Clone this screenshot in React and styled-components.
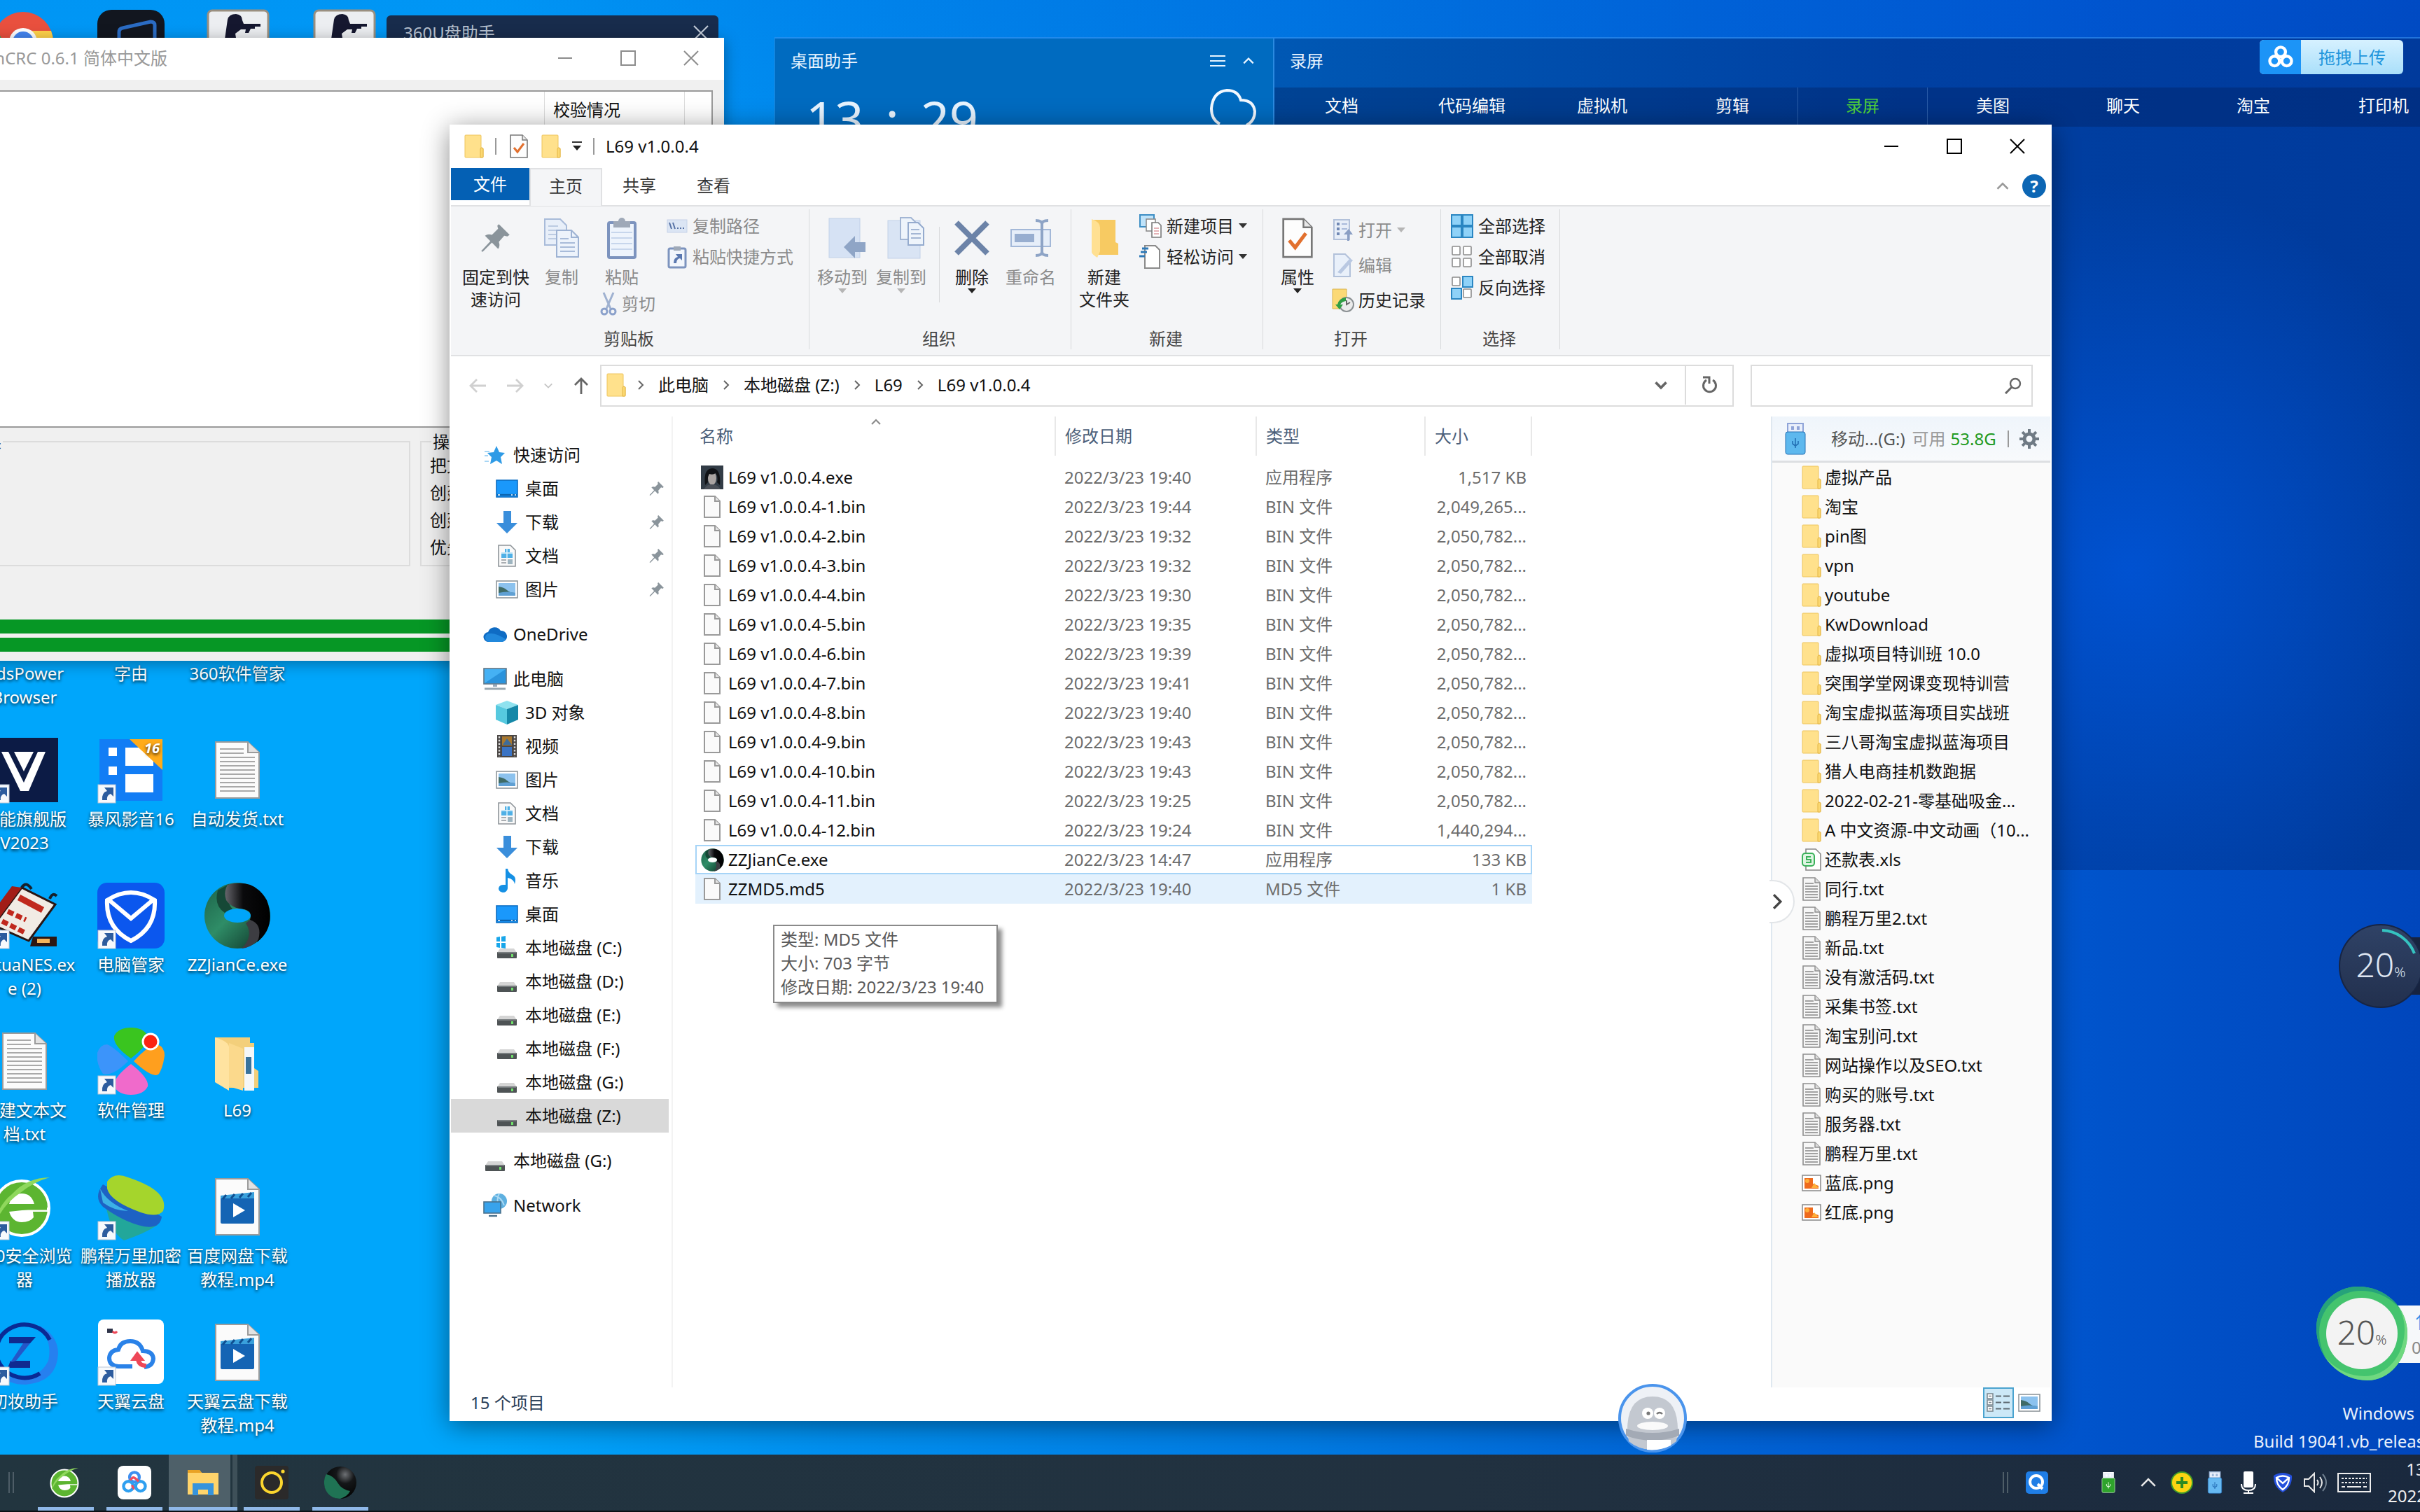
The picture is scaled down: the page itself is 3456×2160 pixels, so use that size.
// src/App.jsx

import React from 'react';
import styled, { createGlobalStyle, css } from 'styled-components';

const GlobalStyle = createGlobalStyle`
  *, *::before, *::after { box-sizing: border-box; }

  body {
    margin: 0;
    overflow: hidden;
    font-family: 'Noto Sans', 'Noto Sans CJK SC', sans-serif;
    font-size: 24px;
    line-height: 32px;
    color: #111;
  }

  button, input {
    font: inherit;
    color: inherit;
    border: 0;
    background: none;
    padding: 0;
    margin: 0;
  }

  a { color: inherit; text-decoration: none; }
  svg { display: block; flex: none; }
  ul { list-style: none; margin: 0; padding: 0; }
`;

/* ---------- Icons ---------- */

const FolderIcon = ({ w = 28, h = 34 }) => (
  <svg width={w} height={h} viewBox="0 0 28 34">
    <path d="M1 2q0-1 1-1h21q1 0 1 1v17l3 1v12q0 1-1 1H2q-1 0-1-1z" fill="#ffe18c" stroke="#eec55c" strokeWidth="1" />
    <path d="M23 33V21q0-2 2-2 2 0 2 2v11q0 1-1 1z" fill="#fbd872" stroke="#e3b445" strokeWidth="1" />
  </svg>
);

const PageIcon = ({ w = 24, h = 32 }) => (
  <svg width={w} height={h} viewBox="0 0 24 32">
    <path d="M1 1h15l7 7v23H1z" fill="#fafafa" stroke="#9a9a9a" strokeWidth="2" />
    <path d="M16 1v7h7" fill="#e4e4e4" stroke="#9a9a9a" strokeWidth="2" />
  </svg>
);

const TextFileIcon = ({ w = 26, h = 34 }) => (
  <svg width={w} height={h} viewBox="0 0 26 34">
    <path d="M1 1h17l7 7v25H1z" fill="#f6f6f6" stroke="#8f8f8f" strokeWidth="1.6" />
    <path d="M18 1v7h7" fill="#ddd" stroke="#8f8f8f" strokeWidth="1.4" />
    <path d="M4 9h12M4 13h18M4 17h18M4 21h18M4 25h18M4 29h18" stroke="#a2a2a2" strokeWidth="1.8" />
  </svg>
);

const CheckPageIcon = ({ w = 26, h = 34 }) => (
  <svg width={w} height={h} viewBox="0 0 26 34">
    <path d="M1 1h17l7 7v25H1z" fill="#fdfdfd" stroke="#777" strokeWidth="1.6" />
    <path d="M18 1v7h7" fill="#e8e8e8" stroke="#777" strokeWidth="1.4" />
    <path d="M6 19l5 6 9-12" fill="none" stroke="#e2702e" strokeWidth="3" />
  </svg>
);

const XlsIcon = () => (
  <svg width="28" height="34" viewBox="0 0 28 34">
    <path d="M6 2h14l7 7v23H6z" fill="#fff" stroke="#888" strokeWidth="1.6" />
    <rect x="1" y="8" width="17" height="18" rx="4" fill="#dff5e3" stroke="#3bb25b" strokeWidth="2" />
    <path d="M13 13H7v4h6v4H6" fill="none" stroke="#3bb25b" strokeWidth="2" />
  </svg>
);

const PngIcon = () => (
  <svg width="28" height="24" viewBox="0 0 28 24">
    <rect x="1" y="1" width="26" height="22" fill="#fff" stroke="#8f8f8f" strokeWidth="1.6" />
    <path d="M4 5h12v8l8 3v4H4z" fill="#ee6a1d" />
    <circle cx="8" cy="9" r="3" fill="#ffb03a" />
    <path d="M14 19l4-7 6 7z" fill="#ffb03a" />
  </svg>
);

const ExePortraitIcon = () => (
  <svg width="32" height="34" viewBox="0 0 32 34">
    <rect width="32" height="34" fill="#323c46" />
    <ellipse cx="16" cy="18" rx="6" ry="10" fill="#aaa4a2" />
    <path d="M6 28Q3 5 16 4q13 0 11 24l-4-4q2-8-2-13-4 3-9 1-3 4-2 12z" fill="#101216" />
    <path d="M4 34q5-8 12-7 8 0 12 7z" fill="#4a4f57" />
  </svg>
);

const OrbIcon = ({ size = 32 }) => (
  <svg width={size} height={size} viewBox="0 0 96 96">
    <defs>
      <linearGradient id="orbGreen" x1="0" y1="0" x2="1" y2="1">
        <stop offset="0" stopColor="#1c6148" />
        <stop offset=".45" stopColor="#2f8d67" />
        <stop offset="1" stopColor="#0b2c22" />
      </linearGradient>
      <linearGradient id="orbDark" x1="0" y1="0" x2="1" y2="0">
        <stop offset="0" stopColor="#66666c" />
        <stop offset=".4" stopColor="#0a0a0c" />
        <stop offset="1" stopColor="#000" />
      </linearGradient>
    </defs>
    <circle cx="48" cy="48" r="47" fill="url(#orbGreen)" />
    <path d="M20 12Q14 34 30 44l12-4Q28 24 36 3z" fill="#164836" />
    <path d="M34 4Q72-6 90 26q14 38-14 60 8-18-10-32 4-12-8-15Q40 38 32 26 28 14 34 4z" fill="url(#orbDark)" />
    <path d="M66 54q18 6 12 28-10 12-24 13 18-18 6-36z" fill="#3d3d42" />
    <ellipse cx="48" cy="48" rx="19" ry="10" fill={size > 40 ? '#00a5fa' : '#fff'} />
  </svg>
);

const SphereIcon = () => (
  <svg width="48" height="48" viewBox="0 0 48 48">
    <defs>
      <radialGradient id="sphere" cx=".65" cy=".25" r=".8">
        <stop offset="0" stopColor="#6d7074" />
        <stop offset=".35" stopColor="#141618" />
        <stop offset="1" stopColor="#000" />
      </radialGradient>
    </defs>
    <circle cx="24" cy="24" r="23" fill="url(#sphere)" />
    <path d="M4 12q10 2 16 12t18 12q-4 8-14 11Q8 47 2 32-1 20 4 12z" fill="#1f7354" />
  </svg>
);

const PinIcon = ({ size = 22, color = '#8a949b' }) => (
  <svg width={size} height={size} viewBox="0 0 40 40">
    <path d="M24 2l14 14-3 2-4-1-7 8q2 6-1 9l-8-8L3 38l-2-1 12-13-7-7q4-3 9-1l8-8-1-4z" fill={color} />
  </svg>
);

const StarIcon = () => (
  <svg width="32" height="32" viewBox="0 0 32 32">
    <path d="M18 3l4 9 8 1-6 6 2 10-8-5-9 5 2-10-6-6 9-1z" fill="#2f9be6" />
    <path d="M1 11h7M1 17h5M1 25h6" stroke="#a7d6f5" strokeWidth="2" />
  </svg>
);

const DesktopIcon = () => (
  <svg width="32" height="26" viewBox="0 0 32 26">
    <rect x="1" y="1" width="30" height="24" fill="#1a98fb" stroke="#0d6fc4" strokeWidth="1.6" />
    <path d="M2 22h28" stroke="#0b62ad" strokeWidth="2.4" />
    <path d="M3 22h3M22 22h2M27 22h2" stroke="#fff" strokeWidth="1.6" />
  </svg>
);

const DownloadIcon = () => (
  <svg width="30" height="32" viewBox="0 0 30 32">
    <path d="M10 0h11v17h9L15 32 0 17h10z" fill="#3a8edb" />
  </svg>
);

const DocIcon = () => (
  <svg width="26" height="32" viewBox="0 0 26 32">
    <path d="M1 1h17l7 7v23H1z" fill="#f9f9f9" stroke="#8e9499" strokeWidth="1.6" />
    <path d="M10 6h7v5h4v8H5v-8h5z" fill="#4fb0e6" />
    <path d="M5 12h16M13 6v13" stroke="#e6f5fd" strokeWidth="1.4" />
    <path d="M5 22h7M5 26h7" stroke="#8e9499" strokeWidth="1.6" />
    <rect x="14" y="21" width="7" height="7" fill="#9db4c0" />
  </svg>
);

const PictureIcon = () => (
  <svg width="32" height="26" viewBox="0 0 32 26">
    <rect x="1" y="1" width="30" height="24" fill="#fff" stroke="#8f979c" strokeWidth="1.6" />
    <rect x="4" y="4" width="24" height="18" fill="#8cc2ee" />
    <path d="M4 9q8 1 12 5t12 4v2H4z" fill="#3f6b66" />
    <path d="M4 18q12-3 24 0v4H4z" fill="#5fa0d4" />
  </svg>
);

const CloudIcon = () => (
  <svg width="34" height="22" viewBox="0 0 34 22">
    <path d="M8 22a7 7 0 0 1-1-14A10 10 0 0 1 25 6a8 8 0 0 1 2 16z" fill="#0f6cc4" />
    <path d="M8 22a6 6 0 0 1 2-12q8-1 22 8-2 4-6 4z" fill="#2188dc" />
  </svg>
);

const PcIcon = () => (
  <svg width="34" height="32" viewBox="0 0 34 32">
    <rect x="1" y="1" width="32" height="22" fill="#45b1f4" stroke="#5f7686" strokeWidth="1.6" />
    <path d="M2 22L32 2v20z" fill="#2a93dc" />
    <path d="M14 24h6v3h-6z" fill="#9ab" />
    <path d="M2 30h30" stroke="#9aa8b0" strokeWidth="3" />
  </svg>
);

const CubeIcon = () => (
  <svg width="32" height="34" viewBox="0 0 32 34">
    <path d="M16 0l16 6-16 6L0 6z" fill="#8fe2ef" />
    <path d="M0 6l16 6v22L0 27z" fill="#56c9df" />
    <path d="M32 6l-16 6v22l16-7z" fill="#1588a8" />
  </svg>
);

const VideoIcon = () => (
  <svg width="28" height="32" viewBox="0 0 28 32">
    <rect width="28" height="32" fill="#4a4644" />
    <rect x="7" y="2" width="14" height="13" fill="#a8782f" />
    <path d="M8 14l6-9 7 9z" fill="#3e6c9a" />
    <rect x="7" y="17" width="14" height="13" fill="#3a73c4" />
    <path d="M3 2v29M25 2v29" stroke="#ddd" strokeWidth="2.4" strokeDasharray="2.4 2.4" />
  </svg>
);

const MusicIcon = () => (
  <svg width="26" height="34" viewBox="0 0 26 34">
    <path d="M11 0h3q1 6 7 9t3 13q-1-7-10-9v15q-1 6-7 6-6-1-6-6 1-5 7-5h3z" fill="#1590e4" />
  </svg>
);

const DriveIcon = ({ win, flat }) => (
  <svg width="32" height="34" viewBox="0 0 32 34">
    {win && <path d="M1 2l5-1v7H1zM8 1l6-1v8H8zM1 10h5v7l-5-1zM8 10h6v8l-6-1z" fill="#18a6ea" />}
    {!flat && <path d="M6 18h20l4 6H2z" fill="#d5d5d5" />}
    <rect x="2" y="23" width="28" height="9" rx="1" fill="#4e5355" />
    <path d="M3 24h26" stroke="#8b9092" strokeWidth="1.4" />
    <rect x="22" y="26" width="3" height="4" fill="#6fe06a" />
  </svg>
);

const NetworkIcon = () => (
  <svg width="34" height="36" viewBox="0 0 34 36">
    <circle cx="23" cy="12" r="11" fill="#5eb0e0" />
    <path d="M16 4q10 2 14 14M23 1q-5 8 0 22" stroke="#a9d8f3" strokeWidth="2" fill="none" />
    <rect x="1" y="13" width="24" height="16" fill="#38a3ec" stroke="#48708c" strokeWidth="1.6" />
    <path d="M8 33h12" stroke="#48708c" strokeWidth="2.4" />
  </svg>
);

const Chevron = ({ dir = 'right', size = 16, color = '#555', stroke = 2 }) => {
  const d = {
    right: 'M5 2l6 6-6 6',
    down: 'M2 5l6 6 6-6',
    up: 'M2 11l6-6 6 6',
  }[dir];
  return (
    <svg width={size} height={size} viewBox="0 0 16 16">
      <path d={d} fill="none" stroke={color} strokeWidth={stroke} />
    </svg>
  );
};

const Caret = ({ color = '#333' }) => (
  <svg width="12" height="8" viewBox="0 0 12 8">
    <path d="M0 0h12L6 7z" fill={color} />
  </svg>
);

const ArrowIcon = ({ dir, color }) => (
  <svg width="28" height="28" viewBox="0 0 28 28">
    <g transform={dir === 'right' ? 'rotate(180 14 14)' : dir === 'up' ? 'rotate(90 14 14)' : undefined}>
      <path d="M26 14H4M13 5l-9 9 9 9" fill="none" stroke={color} strokeWidth="2.8" />
    </g>
  </svg>
);

const MinIcon = ({ color = '#000' }) => (
  <svg width="20" height="20" viewBox="0 0 20 20"><path d="M0 10h20" stroke={color} strokeWidth="2" /></svg>
);
const MaxIcon = ({ color = '#000' }) => (
  <svg width="22" height="22" viewBox="0 0 22 22"><rect x="1" y="1" width="20" height="20" fill="none" stroke={color} strokeWidth="2" /></svg>
);
const CloseIcon = ({ color = '#000' }) => (
  <svg width="22" height="22" viewBox="0 0 22 22"><path d="M1 1l20 20M21 1L1 21" stroke={color} strokeWidth="2" /></svg>
);

const CopyIcon = () => (
  <svg width="50" height="56" viewBox="0 0 50 56">
    <path d="M1 1h22l9 9v28H1z" fill="#e8eff9" stroke="#a8bbd9" strokeWidth="2" />
    <path d="M6 11h14M6 17h20M6 23h20M6 29h20" stroke="#bccbe2" strokeWidth="2" />
    <path d="M18 17h21l10 10v28H18z" fill="#edf3fb" stroke="#9db2d3" strokeWidth="2" />
    <path d="M39 17v10h10" fill="none" stroke="#9db2d3" strokeWidth="2" />
    <path d="M23 29h12M23 35h21M23 41h21M23 47h21" stroke="#a8bbd9" strokeWidth="2" />
  </svg>
);

const PasteIcon = () => (
  <svg width="42" height="60" viewBox="0 0 42 60">
    <rect x="2" y="8" width="38" height="50" rx="2" fill="#eef4fc" stroke="#7c93be" strokeWidth="4" />
    <path d="M6 22h30M6 30h30M6 38h30M6 46h30" stroke="#c7d6ec" strokeWidth="2" />
    <path d="M9 6h7a5 5 0 0 1 10 0h7v9H9z" fill="#9fa9b8" />
  </svg>
);

const ScissorsIcon = () => (
  <svg width="24" height="34" viewBox="0 0 24 34">
    <path d="M5 1l10 23M19 1L9 24" stroke="#9fb1d0" strokeWidth="3" />
    <circle cx="6" cy="28" r="4" fill="none" stroke="#8ba1cb" strokeWidth="3" />
    <circle cx="18" cy="28" r="4" fill="none" stroke="#8ba1cb" strokeWidth="3" />
  </svg>
);

const CopyPathIcon = () => (
  <svg width="30" height="20" viewBox="0 0 30 20">
    <rect x="1" y="1" width="28" height="18" fill="#dbe5f4" stroke="#c5d2e8" />
    <path d="M4 5l3 9M9 5l3 9" stroke="#5772a5" strokeWidth="2" />
    <path d="M15 13h2M19 13h2M23 13h2" stroke="#5772a5" strokeWidth="2" />
  </svg>
);

const PasteShortcutIcon = () => (
  <svg width="30" height="34" viewBox="0 0 30 34">
    <rect x="3" y="5" width="24" height="27" rx="2" fill="#f2f6fc" stroke="#7c93be" strokeWidth="3" />
    <path d="M10 2h10v6H10z" fill="#9fa9b8" />
    <path d="M10 26q0-8 6-9l-3-4h9v9l-3-3q-5 1-5 7z" fill="#5a78b0" />
  </svg>
);

const MoveToIcon = () => (
  <svg width="54" height="58" viewBox="0 0 54 58">
    <rect x="1" y="1" width="44" height="56" fill="#d6e2f4" stroke="#c1d1e8" />
    <path d="M53 35v14H38v9L22 42l16-16v9z" fill="#8fa5c6" />
  </svg>
);

const CopyToIcon = () => (
  <svg width="54" height="60" viewBox="0 0 54 60">
    <rect x="1" y="5" width="46" height="54" fill="#d9e4f4" stroke="#c1d1e8" />
    <path d="M19 1h15l7 7v24H19z" fill="#eef4fb" stroke="#a3b6d4" strokeWidth="2" />
    <path d="M30 8h14l8 8v24H30z" fill="#eef4fb" stroke="#95abce" strokeWidth="2" />
    <path d="M34 18h12M34 24h14M34 30h14" stroke="#a3b6d4" strokeWidth="2" />
  </svg>
);

const DeleteIcon = () => (
  <svg width="52" height="52" viewBox="0 0 52 52">
    <path d="M4 4l44 44M48 4L4 48" stroke="#6c83a8" strokeWidth="8" />
  </svg>
);

const RenameIcon = () => (
  <svg width="58" height="54" viewBox="0 0 58 54">
    <rect x="1" y="15" width="56" height="24" fill="#e6eef9" stroke="#a3b8d8" strokeWidth="2" />
    <rect x="6" y="21" width="28" height="12" fill="#98aed0" />
    <path d="M36 2q9 0 9 5v40q0 5-9 5M54 2q-9 0-9 5v40q0 5 9 5" fill="none" stroke="#8ea4c6" strokeWidth="4" />
  </svg>
);

const NewFolderIcon = () => (
  <svg width="40" height="56" viewBox="0 0 40 56">
    <path d="M2 2h34v32l4 2v16H10z" fill="#f7ca62" />
    <path d="M2 1q12 4 12 12v34l-4 9q-8-5-8-8z" fill="#ffe092" />
  </svg>
);

const NewItemIcon = () => (
  <svg width="32" height="34" viewBox="0 0 32 34">
    <rect x="1" y="1" width="20" height="17" fill="#bfe3fa" stroke="#3d8ec4" strokeWidth="2" />
    <rect x="10" y="7" width="13" height="17" fill="#fff" stroke="#8a8a8a" strokeWidth="1.6" />
    <path d="M18 12h9l4 4v17H18z" fill="#fff" stroke="#7a7a7a" strokeWidth="1.6" />
    <path d="M21 20h7M21 24h7M21 28h7" stroke="#dd9aa0" strokeWidth="1.6" />
  </svg>
);

const EasyAccessIcon = () => (
  <svg width="32" height="34" viewBox="0 0 32 34">
    <path d="M8 1h15l6 6v26H8z" fill="#fff" stroke="#8a8a8a" strokeWidth="2" />
    <path d="M4 5h9M2 10h9M0 16h8" stroke="#2e7ab8" strokeWidth="3" />
  </svg>
);

const OpenListIcon = () => (
  <svg width="28" height="32" viewBox="0 0 28 32">
    <rect x="1" y="1" width="22" height="28" fill="#e7eef8" stroke="#b2c1da" strokeWidth="2" />
    <path d="M5 7h4M5 14h4M5 21h4" stroke="#7088b4" strokeWidth="4" />
    <path d="M12 7h8M12 14h8" stroke="#a9badb" strokeWidth="2" />
    <path d="M20 31V22h-5l7-8 6 8h-5v9z" fill="#8a9fc4" />
  </svg>
);

const EditIcon = () => (
  <svg width="28" height="34" viewBox="0 0 28 34">
    <path d="M1 1h16l7 7v25H1z" fill="#e9f0fa" stroke="#b2c1da" strokeWidth="2" />
    <path d="M6 27L24 7l4 3-17 19z" fill="#b9c8e2" />
  </svg>
);

const HistoryIcon = () => (
  <svg width="32" height="34" viewBox="0 0 32 34">
    <path d="M1 1h20v28H1z" fill="#fbd976" stroke="#d9b450" />
    <circle cx="21" cy="23" r="10" fill="#ebebeb" stroke="#8a8f92" strokeWidth="2" />
    <path d="M20 13q-10 1-12 10h-3l6 7 5-7h-4q2-4 8-5z" fill="#2f9e44" />
    <path d="M21 17v6l5-3" stroke="#666" strokeWidth="2" fill="none" />
  </svg>
);

const SelectGrid = ({ on }) => (
  <svg width="32" height="34" viewBox="0 0 32 34">
    {[[1, 1], [17, 1], [1, 18], [17, 18]].map(([x, y], i) =>
      on[i] ? (
        <rect key={i} x={x} y={y} width="14" height="15" fill="#8fd2f8" stroke="#2a86c2" strokeWidth="2" />
      ) : (
        <rect key={i} x={x + 1} y={y + 1} width="11" height="12" rx="1" fill="#fff" stroke="#8c8c8c" strokeWidth="1.6" />
      )
    )}
  </svg>
);

const UsbIcon = ({ w = 30, h = 46, body = '#5db8ee', cap = '#8fa4d8', mark = '#2470b4' }) => (
  <svg width={w} height={h} viewBox="0 0 30 46">
    <rect x="4" y="1" width="22" height="14" fill="#e9effb" stroke={cap} strokeWidth="2" />
    <path d="M9 5h4v5H9zM17 5h4v5h-4z" fill={cap} />
    <rect x="1" y="13" width="28" height="32" rx="3" fill={body} stroke={mark} strokeWidth="1" />
    <path d="M15 22v14M11 26v4l4 3 4-3v-4" fill="none" stroke={mark} strokeWidth="1.6" />
  </svg>
);

const GearIcon = () => (
  <svg width="30" height="30" viewBox="0 0 30 30">
    <circle cx="15" cy="15" r="7" fill="none" stroke="#6f7a84" strokeWidth="5" />
    {[0, 45, 90, 135, 180, 225, 270, 315].map((a) => (
      <path key={a} d="M15 1v5" stroke="#6f7a84" strokeWidth="4" transform={`rotate(${a} 15 15)`} />
    ))}
  </svg>
);

const DetailsViewIcon = () => (
  <svg width="34" height="28" viewBox="0 0 34 28">
    {[1, 10, 19].map((y) => (
      <g key={y}>
        <rect x="1" y={y} width="8" height="7" fill="#fff" stroke="#7d8a92" strokeWidth="1.6" />
        <path d={`M3 ${y + 3.5}h4`} stroke="#7d8a92" strokeWidth="1.6" />
        <path d={`M13 ${y + 3.5}h8M24 ${y + 3.5}h9`} stroke="#5f6b73" strokeWidth="2" />
      </g>
    ))}
  </svg>
);

const BaiduIcon = ({ size = 44, mono }) => (
  <svg width={size} height={size} viewBox="0 0 44 44">
    <circle cx="22" cy="13" r="8" fill="none" stroke={mono ? '#fff' : '#3e8ff0'} strokeWidth="5" />
    <circle cx="12" cy="28" r="8" fill="none" stroke={mono ? '#fff' : '#2fa0f0'} strokeWidth="5" />
    <circle cx="32" cy="28" r="8" fill="none" stroke={mono ? '#fff' : '#2fa0f0'} strokeWidth="5" />
    {!mono && <path d="M15 18q4-6 7-4t7 6M18 26q2 6 4 6" stroke="#ee4d5e" strokeWidth="4" fill="none" />}
  </svg>
);

const ShortcutBadge = () => (
  <g>
    <rect x="1" y="69" width="25" height="26" fill="#f7f9fc" stroke="#b9c6d6" />
    <path d="M7 91q-1-11 7-13l-4-5h13v13l-4-4q-6 2-5 9z" fill="#2d5c9e" />
  </g>
);

const BigIcon = ({ children, shortcut }) => (
  <svg width="96" height="96" viewBox="0 0 96 96">
    {children}
    {shortcut && <ShortcutBadge />}
  </svg>
);

const BigPage = () => (
  <g>
    <path d="M17 8h46l16 15v65H17z" fill="#fbfbfb" stroke="#9b9b9b" strokeWidth="2" />
    <path d="M63 8v15h16" fill="#e2e2e2" stroke="#9b9b9b" strokeWidth="2" />
  </g>
);

const BigTxt = () => (
  <BigIcon>
    <BigPage />
    <path d="M23 18h34M23 24h34M23 30h50M23 36h50M23 42h50M23 48h50M23 54h50M23 60h50M23 66h50M23 72h50M23 78h50" stroke="#a9a9a9" strokeWidth="2" />
  </BigIcon>
);

const BigMp4 = () => (
  <BigIcon>
    <BigPage />
    <rect x="24" y="34" width="48" height="38" rx="2" fill="#1464b4" />
    <path d="M24 32l48-5v9H24z" fill="#39a0dc" />
    <path d="M32 31l-5 6M44 30l-5 6M56 29l-5 6M68 28l-5 6" stroke="#0f4f92" strokeWidth="3" />
    <path d="M42 43v20l17-10z" fill="#fff" />
  </BigIcon>
);

const BrowserE = () => (
  <g>
    <circle cx="44" cy="50" r="39" fill="#5cb531" stroke="#fff" strokeWidth="4" />
    <path d="M26 44q4-15 18-15t18 15zM26 55h55v-6M26 55q5 15 18 15 12 0 17-7l-1-8" fill="#fff" />
    <path d="M26 49h54" stroke="#5cb531" strokeWidth="7" />
    <path d="M30 30Q52 6 84 6 62 12 42 28 18 44 6 72q4-26 24-42z" fill="#8fd85c" />
  </g>
);

const Big = {
  chrome: () => (
    <BigIcon>
      <circle cx="46" cy="48" r="43" fill="#e9503e" />
      <path d="M46 32h40a43 43 0 0 1 3 16q0 30-28 41z" fill="#ffd24a" />
      <path d="M8 30l34 60q-24 0-36-26-6-18 2-34z" fill="#3ba657" />
      <circle cx="46" cy="48" r="20" fill="#fff" />
      <circle cx="46" cy="48" r="15" fill="#4384f0" />
    </BigIcon>
  ),
  device: () => (
    <BigIcon>
      <rect x="0" y="2" width="96" height="92" rx="20" fill="#12161f" />
      <path d="M31 80V34q0-5 5-6l40-9q6 0 6 5v50" fill="none" stroke="#2b6cc4" strokeWidth="5" />
    </BigIcon>
  ),
  soldier: () => (
    <BigIcon>
      <rect x="6" y="3" width="86" height="90" rx="6" fill="#eceef1" stroke="#9a8f80" strokeWidth="3" />
      <path d="M34 16q2-8 12-8 9 1 9 9l2 5h24v4h-8v3h-6l-3 6h-5l1-5h-7l-8 6 2 12 8 14 6 30H50l-6-22-6 22H28l4-30-2-18z" fill="#15172f" />
    </BigIcon>
  ),
  vLogo: () => (
    <BigIcon shortcut>
      <rect x="0" y="2" width="96" height="92" fill="#0c1b45" />
      <path d="M15 22h10l22 44 20-44h11L54 78H42z" fill="#fff" />
      <path d="M33 22h28L47 50z" fill="#fff" />
    </BigIcon>
  ),
  storm: () => (
    <BigIcon shortcut>
      <rect x="3" y="4" width="90" height="88" fill="#127df5" />
      <path d="M16 16h12v12H16zM16 43h12v12H16zM40 16h40v26H40zM40 54h40v26H40z" fill="#fff" />
      <path d="M46 4h47v44z" fill="#ffab1a" />
      <text x="67" y="24" fontSize="20" fontWeight="700" fontStyle="italic" fill="#fff">16</text>
    </BigIcon>
  ),
  txt: BigTxt,
  nes: () => (
    <BigIcon shortcut>
      <path d="M4 62L44 8l48 24-38 52z" fill="#f1ebe4" stroke="#2a1512" strokeWidth="3" />
      <path d="M4 62L44 8l-14-2L2 44z" fill="#a21d17" />
      <path d="M40 22l34 18" stroke="#c0281d" strokeWidth="9" />
      <path d="M24 42l26 12M16 56l32 16" stroke="#c0281d" strokeWidth="7" strokeDasharray="9 4" />
      <path d="M60 78h34v14H56z" fill="#2d1714" />
      <path d="M66 84h18" stroke="#f5b45c" strokeWidth="6" />
      <path d="M44 8q6-10 14 2M84 24q4-10 10-4" stroke="#16202c" strokeWidth="4" fill="none" />
    </BigIcon>
  ),
  shield: () => (
    <BigIcon shortcut>
      <rect x="0" y="1" width="96" height="94" rx="14" fill="#0b57ee" />
      <path d="M14 26q34-22 68 0 2 40-34 58-36-18-34-58z" fill="none" stroke="#fff" strokeWidth="6" />
      <path d="M17 26l31 26 31-26" fill="none" stroke="#fff" strokeWidth="6" />
    </BigIcon>
  ),
  orb: () => <OrbIcon size={96} />,
  petals: () => (
    <BigIcon shortcut>
      <path d="M48 44Q22 26 24 12q6-12 24-12t24 12q2 12-24 32z" fill="#3ac51f" />
      <path d="M44 48Q22 70 8 66-2 52 0 36q4-12 14-12 10 4 30 24z" fill="#3c94fa" />
      <path d="M48 52q26 20 24 32-6 12-24 12t-24-12q-2-12 24-32z" fill="#f06acb" />
      <path d="M52 48q22-24 34-24 10 4 10 16-2 16-8 26-8 8-36-18z" fill="#ff9f1e" />
      <circle cx="76" cy="20" r="11" fill="#fb2412" stroke="#fff" strokeWidth="3" />
    </BigIcon>
  ),
  l69: () => (
    <BigIcon>
      <path d="M16 14h50v8h6v36l6 4v24H34z" fill="#f3cf7b" />
      <path d="M58 28h14v62H58z" fill="#f4f7f9" />
      <path d="M60 42h8v24h-8z" fill="#39739c" />
      <path d="M16 14q20 6 20 14v62l-20-12z" fill="#ffe3a0" />
      <path d="M36 22l20 8v60l-20-6z" fill="#fbd98c" />
    </BigIcon>
  ),
  browser: () => <BigIcon shortcut><BrowserE /></BigIcon>,
  player: () => (
    <BigIcon shortcut>
      <path d="M12 44q6 40 26 52 30-10 48-22z" fill="#22a79a" />
      <path d="M8 16Q-6 34 8 48q30 22 58 28 24 4 26-14z" fill="#1d62c4" />
      <path d="M14 12Q24-2 44 6q36 12 46 26 8 10 4 22-8 10-32 2Q18 40 14 22z" fill="#a5d52c" />
      <path d="M4 22q10 20 40 32-20 0-36-12z" fill="#3cb2e6" />
    </BigIcon>
  ),
  mp4: BigMp4,
  zLogo: () => (
    <BigIcon shortcut>
      <path d="M70 10q26 14 26 40-2 40-46 44-26 0-36-14 50 16 68-20 6-26-12-50z" fill="#2680ef" />
      <path d="M84 30A40 38 0 1 0 70 78" fill="none" stroke="#0a2a94" strokeWidth="6" />
      <path d="M26 26h38l-8 9H26zM28 60h28v10H24z" fill="#102a90" />
      <path d="M56 35L36 60l-8 2 18-27z" fill="#2457c8" />
    </BigIcon>
  ),
  tianyi: () => (
    <BigIcon shortcut>
      <rect x="1" y="1" width="94" height="92" rx="8" fill="#fff" />
      <path d="M14 14h8v6h-8z" fill="#30354a" />
      <path d="M22 18q3 4 6 0" stroke="#ee4757" strokeWidth="3" fill="none" />
      <path d="M50 68H30q-13-1-13-12 1-11 13-12 3-12 17-12t18 14q14 0 15 11-1 11-13 12" fill="none" stroke="#2a82e8" strokeWidth="6" />
      <path d="M68 69q-10-1-12-10h-7l8-11 9 11h-5q1 6 8 6z" fill="#ee4757" stroke="#ee4757" strokeWidth="2" />
    </BigIcon>
  ),
  blank: () => <BigIcon />,
};

/* ---------- Desktop ---------- */

const Screen = styled.div`
  height: 100vh;
  display: flex;
  flex-direction: column;
  overflow: hidden;
`;

const Desktop = styled.main`
  position: relative;
  flex: 1;
  min-height: 0;
  overflow: hidden;
  background:
    linear-gradient(180deg, rgba(0, 90, 220, 0.22) 0, rgba(0, 90, 220, 0) 24%),
    linear-gradient(90deg, #00a6fb 0%, #00a6fb 20%, #0090f0 34%, #007ae2 54%, #0064d6 70%, #0054cc 86%, #0046bc 100%);
`;

const IconGrid = styled.ul`
  position: absolute;
  left: -41px;
  top: ${(p) => p.$top}px;
  display: grid;
  grid-template-columns: repeat(${(p) => p.$cols}, 152px);
  grid-auto-rows: 208px;
`;

const DesktopItem = styled.a`
  display: flex;
  flex-direction: column;
  align-items: center;
  gap: 5px;
  padding-top: 6px;
  color: #fff;
  line-height: 34px;
  text-align: center;
  text-shadow: 0 2px 4px rgba(0, 0, 0, 0.8);
`;

const DesktopLabel = styled.span`
  white-space: pre;
`;

const topIcons = [['chrome'], ['device'], ['soldier'], ['soldier']];

const desktopIcons = [
  ['blank', 'AdsPower\nBrowser'], ['blank', '字由'], ['blank', '360软件管家'],
  ['vLogo', '全能旗舰版\nV2023'], ['storm', '暴风影音16'], ['txt', '自动发货.txt'],
  ['nes', 'VirtuaNES.ex\ne (2)'], ['shield', '电脑管家'], ['orb', 'ZZJianCe.exe'],
  ['txt', '新建文本文\n档.txt'], ['petals', '软件管理'], ['l69', 'L69'],
  ['browser', '360安全浏览\n器'], ['player', '鹏程万里加密\n播放器'], ['mp4', '百度网盘下载\n教程.mp4'],
  ['zLogo', '初妆助手'], ['tianyi', '天翼云盘'], ['mp4', '天翼云盘下载\n教程.mp4'],
];

const Icons = ({ items, top, cols }) => (
  <IconGrid $top={top} $cols={cols}>
    {items.map(([icon, label], i) => {
      const Glyph = Big[icon];
      return (
        <li key={i}>
          <DesktopItem href="#">
            <Glyph />
            {label && <DesktopLabel>{label}</DesktopLabel>}
          </DesktopItem>
        </li>
      );
    })}
  </IconGrid>
);

/* ---------- Desktop assistant panels ---------- */

const Assistant = styled.section`
  position: absolute;
  left: 1106px;
  right: 0;
  top: 53px;
  height: 1190px;
  display: flex;
  color: #e8f4ff;
  overflow: hidden;
  border-top: 2px solid rgba(60, 150, 240, 0.55);
`;

const ClockPanel = styled.div`
  width: 714px;
  flex: none;
  background: #006bc0;
  border-left: 1px solid rgba(60, 160, 240, 0.5);
  border-right: 2px solid #2a8ae0;
`;

const BoxPanel = styled.div`
  flex: 1;
  min-width: 0;
  display: flex;
  flex-direction: column;
  background:
    radial-gradient(ellipse 500px 560px at 1220px 760px, rgba(0, 84, 214, 0.9), rgba(0, 84, 214, 0) 100%),
    linear-gradient(90deg, #0058b4, #0040a2 55%, #003a9c);
`;

const PanelHead = styled.div`
  height: 70px;
  display: flex;
  align-items: center;
  gap: 24px;
  padding: 0 26px 6px 22px;
`;

const PanelTitle = styled.span`
  flex: 1;
`;

const ClockRow = styled.div`
  display: flex;
  align-items: flex-start;
  justify-content: space-between;
  padding: 0 24px 0 44px;
`;

const BigTime = styled.time`
  display: flex;
  gap: 31px;
  font-size: 72px;
  line-height: 88px;
`;

const TabStrip = styled.div`
  display: flex;
  height: 56px;
  padding-left: 3px;
  overflow: hidden;
  background: rgba(0, 30, 90, 0.35);
`;

const StripTab = styled.button`
  width: 186px;
  flex: none;
  padding-bottom: 4px;
  color: #fff;
  ${(p) => p.$active && css`
    color: #4fd23a;
    border-left: 1px solid rgba(120, 170, 230, 0.35);
    border-right: 1px solid rgba(120, 170, 230, 0.35);
  `}
`;

const stripTabs = ['文档', '代码编辑', '虚拟机', '剪辑', '录屏', '美图', '聊天', '淘宝', '打印机'];

const UploadChip = styled.button`
  position: absolute;
  right: 24px;
  top: 57px;
  display: flex;
  width: 205px;
  height: 49px;
  border-radius: 6px;
  overflow: hidden;
  background: linear-gradient(180deg, #d6f1ff, #a9dffa);
  color: #2196dc;
  line-height: 49px;
`;

const ChipIcon = styled.span`
  width: 59px;
  height: 49px;
  display: flex;
  align-items: center;
  justify-content: center;
  background: #1c94f7;
`;

const ChipText = styled.span`
  flex: 1;
  text-align: center;
`;

/* ---------- 360 U盘 bar and CRC window ---------- */

const DiskBar = styled.div`
  position: absolute;
  left: 552px;
  top: 22px;
  width: 474px;
  height: 50px;
  display: flex;
  justify-content: space-between;
  align-items: center;
  padding: 0 14px 0 24px;
  border-radius: 6px 6px 0 0;
  background: #182c4c;
  color: #b8c2d0;
`;

const CrcWindow = styled.section`
  position: absolute;
  left: -120px;
  top: 54px;
  width: 1154px;
  height: 890px;
  display: flex;
  flex-direction: column;
  background: #f0f0f0;
  box-shadow: 0 4px 20px rgba(0, 0, 0, 0.35);
`;

const CrcTitle = styled.header`
  height: 60px;
  display: flex;
  align-items: center;
  padding-bottom: 2px;
  background: #fff;
  color: #999;
`;

const CrcName = styled.span`
  width: 359px;
  text-align: right;
  white-space: nowrap;
`;

const CrcButtons = styled.div`
  display: flex;
  margin-left: auto;
  padding-right: 2px;
`;

const WinButton = styled.button`
  width: 90px;
  height: 58px;
  display: flex;
  align-items: center;
  justify-content: center;
`;

const CrcList = styled.div`
  height: 482px;
  margin: 15px 16px 0 0;
  display: flex;
  justify-content: flex-end;
  background: #fff;
  border: 2px solid #9a9a9a;
`;

const CrcColumn = styled.div`
  width: ${(p) => p.$w}px;
  height: 56px;
  padding: 10px 12px;
  border-left: 1px solid #ddd;
`;

const CrcGroups = styled.div`
  display: flex;
  gap: 14px;
  margin-top: 6px;
  align-items: flex-start;
`;

const CrcFieldset = styled.fieldset`
  width: ${(p) => p.$w}px;
  height: 192px;
  margin: 0;
  padding: 0 0 0 12px;
  border: 2px solid #dcdcdc;
  line-height: 39px;
  white-space: nowrap;
  overflow: hidden;

  legend {
    padding: 0 2px;
    margin-left: ${(p) => p.$legend}px;
    line-height: 28px;
  }
`;

const GreenBars = styled.div`
  display: flex;
  flex-direction: column;
  gap: 6px;
  margin-top: auto;
  padding-bottom: 13px;
`;

const GreenBar = styled.div`
  height: 20px;
  background: #069725;
`;

/* ---------- Explorer ---------- */

const Explorer = styled.section`
  position: absolute;
  left: 642px;
  right: 526px;
  top: 178px;
  bottom: 48px;
  display: flex;
  flex-direction: column;
  padding: 0 2px;
  background: #fff;
  box-shadow: 0 6px 36px rgba(0, 0, 0, 0.45);
`;

const TitleBar = styled.header`
  height: 62px;
  display: flex;
  align-items: center;
  padding: 0 2px 0 19px;
`;

const TitleTools = styled.div`
  display: flex;
  align-items: center;
  gap: 16px;
  flex: 1;
`;

const Divider = styled.span`
  width: 2px;
  height: 24px;
  background: #999;
`;

const TitleText = styled.h1`
  margin: 0;
  font-size: 24px;
  font-weight: 400;
`;

const TabRow = styled.nav`
  height: 53px;
  display: flex;
  align-items: flex-start;
`;

const Tab = styled.button`
  width: 106px;
  height: 54px;
  padding-bottom: 4px;
  position: relative;
  color: #333;
  ${(p) => p.$file && css`
    width: 112px;
    height: 46px;
    padding: 0;
    background: #0460b4;
    color: #fff;
  `}
  ${(p) => p.$active && css`
    width: 104px;
    background: #f4f5f7;
    border: 2px solid #e0e1e3;
    border-bottom: 0;
    z-index: 1;
  `}
`;

const TabRowEnd = styled.div`
  display: flex;
  align-items: center;
  gap: 18px;
  margin-left: auto;
  height: 52px;
  padding-right: 6px;
`;

const HelpButton = styled.button`
  width: 34px;
  height: 34px;
  border-radius: 50%;
  background: #0c66b4;
  color: #fff;
  font-weight: 700;
`;

const Ribbon = styled.div`
  height: 216px;
  display: flex;
  background: #f4f5f7;
  border-top: 2px solid #e0e1e3;
  border-bottom: 2px solid #e0e1e3;
`;

const Group = styled.div`
  width: ${(p) => p.$w}px;
  flex: none;
  display: flex;
  flex-direction: column;
  padding: 6px 0 7px;
  position: relative;

  &::after {
    content: '';
    position: absolute;
    right: 0;
    top: 4px;
    bottom: 8px;
    width: 1px;
    background: #d8dadc;
  }
`;

const GroupBody = styled.div`
  flex: 1;
  display: flex;
  align-items: flex-start;
  padding-left: ${(p) => p.$pad}px;
`;

const GroupLabel = styled.div`
  text-align: center;
  padding-right: 4px;
  color: #444;
`;

const LargeButton = styled.button`
  width: ${(p) => p.$w}px;
  padding-top: 7px;
  display: flex;
  flex-direction: column;
  align-items: center;
  white-space: pre;
  color: ${(p) => (p.$dim ? '#8b8b8b' : '#222')};
`;

const LargeIcon = styled.span`
  height: 64px;
  margin-bottom: 8px;
  padding-left: ${(p) => p.$shift || 0}px;
  display: flex;
  align-items: center;
`;

const SmallColumn = styled.div`
  display: flex;
  flex-direction: column;
  padding-left: ${(p) => p.$pad}px;
  padding-top: ${(p) => p.$top || 0}px;
`;

const SmallButton = styled.button`
  height: ${(p) => p.$h || 44}px;
  display: flex;
  align-items: center;
  gap: 7px;
  color: ${(p) => (p.$dim ? '#8b8b8b' : '#222')};
`;

const IconSlot = styled.span`
  width: ${(p) => p.$w}px;
  display: flex;
  justify-content: center;
  flex: none;
`;

const RibbonRule = styled.span`
  width: 1px;
  height: 108px;
  margin: 23px 8px 0 12px;
  background: #d8dadc;
`;

const Large = ({ w, icon, label, dim, caret, shift }) => (
  <LargeButton $w={w} $dim={dim}>
    <LargeIcon $shift={shift}>{icon}</LargeIcon>
    {label}
    {caret && <Caret color={dim ? '#b5b5b5' : '#222'} />}
  </LargeButton>
);

const Small = ({ slot = 30, icon, label, dim, caret, h }) => (
  <SmallButton $dim={dim} $h={h}>
    <IconSlot $w={slot}>{icon}</IconSlot>
    {label}
    {caret && <Caret color={dim ? '#b5b5b5' : '#333'} />}
  </SmallButton>
);

const AddressRow = styled.div`
  height: 86px;
  display: flex;
  align-items: flex-start;
  padding: 12px 25px 14px 24px;
  gap: 24px;
`;

const NavButtons = styled.div`
  height: 60px;
  width: 190px;
  flex: none;
  display: flex;
  align-items: center;
  justify-content: space-between;
  margin-right: -25px;
  padding-right: 14px;
`;

const AddressBox = styled.div`
  flex: 1;
  min-width: 0;
  height: 60px;
  display: flex;
  align-items: center;
  border: 2px solid #dcdcdc;
  padding: 0 0 2px 7px;
`;

const Crumbs = styled.div`
  flex: 1;
  display: flex;
  align-items: center;
  gap: 17px;
  padding-left: 13px;
`;

const AddressButton = styled.button`
  width: 68px;
  height: 56px;
  display: flex;
  align-items: center;
  justify-content: center;
  ${(p) => p.$ruled && css`
    border-left: 2px solid #dcdcdc;
  `}
`;

const SearchBox = styled.label`
  width: 403px;
  height: 60px;
  display: flex;
  align-items: center;
  border: 2px solid #dcdcdc;
  padding: 0 14px;

  input {
    flex: 1;
    min-width: 0;
    outline: 0;
  }
`;

const Body = styled.div`
  flex: 1;
  min-height: 0;
  display: flex;
`;

const Sidebar = styled.nav`
  width: 317px;
  flex: none;
  display: flex;
  flex-direction: column;
  gap: 16px;
  padding-top: 31px;
  border-right: 2px solid #f3f3f3;
`;

const SideItem = styled.a`
  height: 48px;
  margin-right: 4px;
  display: flex;
  align-items: center;
  gap: 9px;
  padding: 0 6px 0 ${(p) => (p.$child ? 63 : 46)}px;
  background: ${(p) => (p.$active ? '#d9d9d9' : 'transparent')};

  > span:nth-child(2) {
    flex: 1;
  }
`;

const sideGroups = [
  [
    { icon: <StarIcon />, label: '快速访问' },
    { icon: <DesktopIcon />, label: '桌面', child: true, pinned: true },
    { icon: <DownloadIcon />, label: '下载', child: true, pinned: true },
    { icon: <DocIcon />, label: '文档', child: true, pinned: true },
    { icon: <PictureIcon />, label: '图片', child: true, pinned: true },
  ],
  [{ icon: <CloudIcon />, label: 'OneDrive' }],
  [
    { icon: <PcIcon />, label: '此电脑' },
    { icon: <CubeIcon />, label: '3D 对象', child: true },
    { icon: <VideoIcon />, label: '视频', child: true },
    { icon: <PictureIcon />, label: '图片', child: true },
    { icon: <DocIcon />, label: '文档', child: true },
    { icon: <DownloadIcon />, label: '下载', child: true },
    { icon: <MusicIcon />, label: '音乐', child: true },
    { icon: <DesktopIcon />, label: '桌面', child: true },
    { icon: <DriveIcon win />, label: '本地磁盘 (C:)', child: true },
    { icon: <DriveIcon />, label: '本地磁盘 (D:)', child: true },
    { icon: <DriveIcon />, label: '本地磁盘 (E:)', child: true },
    { icon: <DriveIcon />, label: '本地磁盘 (F:)', child: true },
    { icon: <DriveIcon />, label: '本地磁盘 (G:)', child: true },
    { icon: <DriveIcon flat />, label: '本地磁盘 (Z:)', child: true, active: true },
  ],
  [{ icon: <DriveIcon />, label: '本地磁盘 (G:)' }],
  [{ icon: <NetworkIcon />, label: 'Network' }],
];

const FileArea = styled.div`
  flex: 1;
  min-width: 0;
  padding-left: 32px;
  position: relative;
`;

const FileTable = styled.table`
  border-collapse: collapse;
  table-layout: fixed;
  width: 1195px;
`;

const HeadCell = styled.th`
  height: 66px;
  padding: 0;
  vertical-align: top;
  font-weight: 400;
  text-align: left;
  color: #4c607a;
  position: relative;

  > button {
    display: block;
    width: 100%;
    height: 56px;
    text-align: left;
    padding-left: ${(p) => (p.$first ? 6 : 13)}px;
    border-right: 2px solid #e8e8e8;
  }

  > svg {
    position: absolute;
    left: 0;
    right: 0;
    top: 0;
    margin: 0 auto;
  }
`;

const FileRow = styled.tr`
  height: 42px;
  ${(p) => p.$focused && css`
    outline: 2px solid #a6d4f7;
    outline-offset: -2px;
  `}
  ${(p) => p.$hover && css`
    background: #e3f1fd;
  `}
`;

const Cell = styled.td`
  padding: 0 8px 0 12px;
  color: #6d6d6d;
  white-space: nowrap;
  text-align: ${(p) => (p.$right ? 'right' : 'left')};
`;

const NameCell = styled.td`
  padding: 0 0 0 6px;

  > span {
    display: flex;
    align-items: center;
    gap: 5px;
  }
`;

const files = [
  ['L69 v1.0.0.4.exe', '19:40', '应用程序', '1,517 KB', <ExePortraitIcon />],
  ['L69 v1.0.0.4-1.bin', '19:44', 'BIN 文件', '2,049,265...'],
  ['L69 v1.0.0.4-2.bin', '19:32', 'BIN 文件', '2,050,782...'],
  ['L69 v1.0.0.4-3.bin', '19:32', 'BIN 文件', '2,050,782...'],
  ['L69 v1.0.0.4-4.bin', '19:30', 'BIN 文件', '2,050,782...'],
  ['L69 v1.0.0.4-5.bin', '19:35', 'BIN 文件', '2,050,782...'],
  ['L69 v1.0.0.4-6.bin', '19:39', 'BIN 文件', '2,050,782...'],
  ['L69 v1.0.0.4-7.bin', '19:41', 'BIN 文件', '2,050,782...'],
  ['L69 v1.0.0.4-8.bin', '19:40', 'BIN 文件', '2,050,782...'],
  ['L69 v1.0.0.4-9.bin', '19:43', 'BIN 文件', '2,050,782...'],
  ['L69 v1.0.0.4-10.bin', '19:43', 'BIN 文件', '2,050,782...'],
  ['L69 v1.0.0.4-11.bin', '19:25', 'BIN 文件', '2,050,782...'],
  ['L69 v1.0.0.4-12.bin', '19:24', 'BIN 文件', '1,440,294...'],
  ['ZZJianCe.exe', '14:47', '应用程序', '133 KB', <OrbIcon size={33} />],
  ['ZZMD5.md5', '19:40', 'MD5 文件', '1 KB'],
];

const Tooltip = styled.div`
  position: absolute;
  left: 143px;
  top: 726px;
  padding: 2px 18px 4px 9px;
  border: 2px solid #8a8a8a;
  background: #fff;
  box-shadow: 6px 6px 6px rgba(0, 0, 0, 0.45);
  color: #5a5a5a;
  line-height: 34px;
  white-space: nowrap;
`;

const DiskPane = styled.aside`
  width: 399px;
  flex: none;
  position: relative;
  background: #fafafa;
  border-left: 2px solid #dfe8f0;
`;

const DiskHead = styled.div`
  height: 66px;
  display: flex;
  align-items: center;
  gap: 10px;
  padding: 0 15px 0 18px;
  background: linear-gradient(180deg, #eff5fb, #f8fafc);
  border-bottom: 3px solid #dddfe2;

  > svg:first-child {
    margin-right: 26px;
  }

  > svg:last-child {
    margin-left: auto;
  }
`;

const DiskName = styled.span`
  color: #555;
`;

const FreeSize = styled.span`
  color: #219a21;
  margin: 0 6px 0 -3px;
`;

const MutedText = styled.span`
  color: #999;
`;

const DiskRow = styled.li`
  height: 42px;
  display: flex;
  align-items: center;
  gap: 5px;
  padding-left: 42px;
  white-space: nowrap;
`;

const PaneHandle = styled.button`
  position: absolute;
  left: -4px;
  top: 662px;
  width: 36px;
  height: 62px;
  display: flex;
  align-items: center;
  justify-content: center;
  padding-right: 12px;
  background: #fff;
  border: 2px solid #e2e5e8;
  border-left: 0;
  border-radius: 0 31px 31px 0;
`;

const folder = <FolderIcon />;
const text = <TextFileIcon />;

const diskFiles = [
  ['虚拟产品', folder],
  ['淘宝', folder],
  ['pin图', folder],
  ['vpn', folder],
  ['youtube', folder],
  ['KwDownload', folder],
  ['虚拟项目特训班 10.0', folder],
  ['突围学堂网课变现特训营', folder],
  ['淘宝虚拟蓝海项目实战班', folder],
  ['三八哥淘宝虚拟蓝海项目', folder],
  ['猎人电商挂机数跑据', folder],
  ['2022-02-21-零基础吸金...', folder],
  ['A 中文资源-中文动画（10...', folder],
  ['还款表.xls', <XlsIcon />],
  ['同行.txt', text],
  ['鹏程万里2.txt', text],
  ['新品.txt', text],
  ['没有激活码.txt', text],
  ['采集书签.txt', text],
  ['淘宝别问.txt', text],
  ['网站操作以及SEO.txt', text],
  ['购买的账号.txt', text],
  ['服务器.txt', text],
  ['鹏程万里.txt', text],
  ['蓝底.png', <PngIcon />],
  ['红底.png', <PngIcon />],
];

const StatusBar = styled.footer`
  height: 48px;
  display: flex;
  align-items: center;
  padding: 0 8px 4px 28px;
  color: #2b4058;
`;

const ViewButton = styled.button`
  width: 44px;
  height: 44px;
  display: flex;
  align-items: center;
  justify-content: center;
  ${(p) => p.$active && css`
    margin-left: auto;
    background: #cce8f7;
    border: 2px solid #4aa3cf;
  `}
`;

/* ---------- Floating widgets ---------- */

const Mascot = styled.div`
  position: absolute;
  left: 2310px;
  bottom: 3px;
`;

const DarkMeter = styled.div`
  position: absolute;
  right: -4px;
  top: 1320px;
  width: 120px;
  height: 120px;
  border-radius: 50%;
  background: linear-gradient(180deg, #2f4266, #22304e);
  border: 2px solid #172544;
  color: #dfe6f2;
`;

const MeterBack = styled.div`
  position: absolute;
  right: 0;
  top: 1339px;
  width: 40px;
  height: 82px;
  background: #17233f;
`;

const GreenMeter = styled.div`
  position: absolute;
  right: 18px;
  top: 1838px;
  width: 130px;
  height: 134px;
  border-radius: 46% 54% 44% 56% / 44% 50% 50% 56%;
  background: #44c46e;
  box-shadow: inset 4px 6px 0 #26a37a, inset -4px -6px 0 #6fd880;
  display: flex;
  align-items: center;
  justify-content: center;
`;

const GreenMeterFace = styled.div`
  width: 102px;
  height: 102px;
  border-radius: 50%;
  background: #f3f3f3;
  color: #555;
`;

const MeterText = styled.div`
  height: 100%;
  display: flex;
  align-items: baseline;
  justify-content: center;
  padding-top: ${(p) => p.$top}px;
  font-size: 48px;
  line-height: 64px;
  font-weight: 300;

  small {
    font-size: 20px;
  }
`;

const MeterArc = styled.svg`
  position: absolute;
  left: 0;
  top: 0;
`;

const NetSpeed = styled.div`
  position: absolute;
  right: 0;
  top: 1865px;
  width: 50px;
  height: 82px;
  padding: 6px 0 0 38px;
  overflow: hidden;
  background: #f6f8fa;
  line-height: 36px;
  color: #888;

  span:first-child {
    display: block;
    color: #2a8ae8;
  }
`;

const Watermark = styled.div`
  position: absolute;
  right: 0;
  bottom: -1px;
  width: 238px;
  overflow: hidden;
  white-space: nowrap;
  color: #e8f0fb;
  line-height: 40px;

  p {
    margin: 0;
  }

  p:first-child {
    text-align: right;
    padding-right: 8px;
  }
`;

/* ---------- Taskbar ---------- */

const Taskbar = styled.footer`
  height: 82px;
  flex: none;
  display: flex;
  align-items: stretch;
  background: linear-gradient(90deg, #22353f, #213140 60%, #1a293e);
  border-bottom: 2px solid #0a0f14;
  color: #f0f0f0;
`;

const Grip = styled.span`
  width: ${(p) => p.$w}px;
  display: flex;
  align-items: center;
  gap: 4px;
  padding-left: ${(p) => p.$pad}px;

  &::before, &::after {
    content: '';
    width: 2px;
    height: 30px;
    background: #4e5d67;
  }
`;

const TaskButton = styled.button`
  width: 98px;
  display: flex;
  align-items: center;
  justify-content: center;
  position: relative;

  &::after {
    content: '';
    position: absolute;
    left: ${(p) => (p.$active ? 0 : 9)}px;
    right: ${(p) => (p.$active ? 0 : 9)}px;
    bottom: 0;
    height: 5px;
    background: #8fb8e8;
  }

  ${(p) => p.$active && css`
    background: linear-gradient(90deg, #4e6069 88px, #22353f 88px, #22353f 91px, #3e5059 91px);
  `}
`;

const BaiduTile = styled.span`
  width: 48px;
  height: 48px;
  border-radius: 8px;
  background: #fff;
  display: flex;
  align-items: center;
  justify-content: center;
`;

const Tray = styled.div`
  margin-left: auto;
  display: flex;
  align-items: center;
`;

const TrayIcon = styled.button`
  width: ${(p) => p.$w}px;
  height: 74px;
  margin-right: ${(p) => p.$gap || 0}px;
  display: flex;
  align-items: center;
  justify-content: center;
`;

const Clock = styled.time`
  width: 46px;
  margin-left: 24px;
  overflow: hidden;
  line-height: 38px;

  > span {
    display: block;
    width: 114px;
    text-align: center;
  }
`;

const App = () => (
  <Screen>
    <GlobalStyle />
    <Desktop>
      <Icons items={topIcons} top={6} cols={4} />
      <Icons items={desktopIcons} top={838} cols={3} />

      <Assistant>
        <ClockPanel>
          <PanelHead>
            <PanelTitle>桌面助手</PanelTitle>
            <svg width="22" height="18" viewBox="0 0 22 18">
              <path d="M0 2h22M0 9h22M0 16h22" stroke="#e8f4ff" strokeWidth="2" />
            </svg>
            <Chevron dir="up" size={18} color="#e8f4ff" />
          </PanelHead>
          <ClockRow>
            <BigTime><span>13</span><span>:</span><span>29</span></BigTime>
            <svg width="66" height="60" viewBox="0 0 66 60">
              <path d="M14 52Q2 46 2 30 4 6 24 4q16 0 20 14 18 0 20 16 0 14-12 20" fill="none" stroke="#f2f8ff" strokeWidth="4" />
            </svg>
          </ClockRow>
        </ClockPanel>
        <BoxPanel>
          <PanelHead><PanelTitle>录屏</PanelTitle></PanelHead>
          <TabStrip>
            {stripTabs.map((t) => (
              <StripTab key={t} $active={t === '录屏'}>{t}</StripTab>
            ))}
          </TabStrip>
        </BoxPanel>
      </Assistant>

      <UploadChip>
        <ChipIcon><BaiduIcon size={38} mono /></ChipIcon>
        <ChipText>拖拽上传</ChipText>
      </UploadChip>

      <DiskBar>
        360U盘助手
        <CloseIcon color="#c8d0dc" />
      </DiskBar>

      <CrcWindow>
        <CrcTitle>
          <CrcName>HashCRC 0.6.1 简体中文版</CrcName>
          <CrcButtons>
            <WinButton aria-label="最小化"><MinIcon color="#8c8c8c" /></WinButton>
            <WinButton aria-label="最大化"><MaxIcon color="#8c8c8c" /></WinButton>
            <WinButton aria-label="关闭"><CloseIcon color="#8c8c8c" /></WinButton>
          </CrcButtons>
        </CrcTitle>
        <CrcList>
          <CrcColumn $w={200}>校验情况</CrcColumn>
          <CrcColumn $w={39} />
        </CrcList>
        <CrcGroups>
          <CrcFieldset $w={706} $legend={58}>
            <legend>结果</legend>
          </CrcFieldset>
          <CrcFieldset $w={420} $legend={2}>
            <legend>操作</legend>
            把文件<br />创建校验<br />创建文件<br />优先级
          </CrcFieldset>
        </CrcGroups>
        <GreenBars>
          <GreenBar />
          <GreenBar />
        </GreenBars>
      </CrcWindow>

      <Explorer>
        <TitleBar>
          <TitleTools>
            <FolderIcon />
            <Divider />
            <IconSlot $w={32}><CheckPageIcon /></IconSlot>
            <FolderIcon />
            <svg width="14" height="16" viewBox="0 0 14 16">
              <path d="M0 2h14" stroke="#333" strokeWidth="2" />
              <path d="M1 7h12L7 14z" fill="#222" />
            </svg>
            <Divider />
            <TitleText>L69 v1.0.0.4</TitleText>
          </TitleTools>
          <WinButton aria-label="最小化"><MinIcon /></WinButton>
          <WinButton aria-label="最大化"><MaxIcon /></WinButton>
          <WinButton aria-label="关闭"><CloseIcon /></WinButton>
        </TitleBar>

        <TabRow>
          <Tab $file>文件</Tab>
          <Tab $active>主页</Tab>
          <Tab>共享</Tab>
          <Tab>查看</Tab>
          <TabRowEnd>
            <Chevron dir="up" size={20} color="#999" />
            <HelpButton>?</HelpButton>
          </TabRowEnd>
        </TabRow>

        <Ribbon>
          <Group $w={512}>
            <GroupBody $pad={8}>
              <Large w={112} icon={<PinIcon size={44} />} label={'固定到快\n速访问'} />
              <Large w={76} icon={<CopyIcon />} label="复制" dim />
              <SmallColumn>
                <Large w={96} icon={<PasteIcon />} label="粘贴" dim />
                <SmallColumn $pad={16}>
                  <Small slot={25} icon={<ScissorsIcon />} label="剪切" dim />
                </SmallColumn>
              </SmallColumn>
              <SmallColumn $pad={16}>
                <Small icon={<CopyPathIcon />} label="复制路径" dim />
                <Small icon={<PasteShortcutIcon />} label="粘贴快捷方式" dim />
              </SmallColumn>
            </GroupBody>
            <GroupLabel>剪贴板</GroupLabel>
          </Group>

          <Group $w={374}>
            <GroupBody $pad={5}>
              <Large w={84} icon={<MoveToIcon />} label="移动到" dim caret shift={14} />
              <Large w={84} icon={<CopyToIcon />} label="复制到" dim caret shift={14} />
              <RibbonRule />
              <Large w={76} icon={<DeleteIcon />} label="删除" caret />
              <Large w={92} icon={<RenameIcon />} label="重命名" dim />
            </GroupBody>
            <GroupLabel>组织</GroupLabel>
          </Group>

          <Group $w={274}>
            <GroupBody $pad={3}>
              <Large w={88} icon={<NewFolderIcon />} label={'新建\n文件夹'} />
              <SmallColumn $pad={6}>
                <Small slot={32} icon={<NewItemIcon />} label="新建项目" caret />
                <Small slot={32} icon={<EasyAccessIcon />} label="轻松访问" caret />
              </SmallColumn>
            </GroupBody>
            <GroupLabel>新建</GroupLabel>
          </Group>

          <Group $w={254}>
            <GroupBody $pad={7}>
              <Large w={84} icon={<CheckPageIcon w={44} h={58} />} label="属性" caret />
              <SmallColumn $pad={8} $top={3}>
                <Small h={50} icon={<OpenListIcon />} label="打开" dim caret />
                <Small h={50} icon={<EditIcon />} label="编辑" dim />
                <Small h={50} icon={<HistoryIcon />} label="历史记录" />
              </SmallColumn>
            </GroupBody>
            <GroupLabel>打开</GroupLabel>
          </Group>

          <Group $w={170}>
            <GroupBody $pad={14}>
              <SmallColumn>
                <Small slot={32} icon={<SelectGrid on={[1, 1, 1, 1]} />} label="全部选择" />
                <Small slot={32} icon={<SelectGrid on={[0, 0, 0, 0]} />} label="全部取消" />
                <Small slot={32} icon={<SelectGrid on={[0, 1, 1, 0]} />} label="反向选择" />
              </SmallColumn>
            </GroupBody>
            <GroupLabel>选择</GroupLabel>
          </Group>
        </Ribbon>

        <AddressRow>
          <NavButtons>
            <ArrowIcon dir="left" color="#d0d0d0" />
            <ArrowIcon dir="right" color="#d0d0d0" />
            <Chevron dir="down" size={14} color="#c4c4c4" />
            <ArrowIcon dir="up" color="#666" />
          </NavButtons>
          <AddressBox>
            <FolderIcon />
            <Crumbs>
              <Chevron color="#666" />
              <a href="#">此电脑</a>
              <Chevron color="#666" />
              <a href="#">本地磁盘 (Z:)</a>
              <Chevron color="#666" />
              <a href="#">L69</a>
              <Chevron color="#666" />
              <a href="#">L69 v1.0.0.4</a>
            </Crumbs>
            <AddressButton aria-label="历史"><Chevron dir="down" size={20} color="#666" stroke={3} /></AddressButton>
            <AddressButton $ruled aria-label="刷新">
              <svg width="24" height="26" viewBox="0 0 24 26">
                <path d="M17 6a9 9 0 1 1-9 0" fill="none" stroke="#666" strokeWidth="3" />
                <path d="M3 2h9v9" fill="none" stroke="#666" strokeWidth="3" />
              </svg>
            </AddressButton>
          </AddressBox>
          <SearchBox>
            <input type="text" aria-label="搜索" />
            <svg width="24" height="24" viewBox="0 0 24 24">
              <circle cx="15" cy="9" r="7" fill="none" stroke="#666" strokeWidth="2.4" />
              <path d="M10 14L1 23" stroke="#666" strokeWidth="3" />
            </svg>
          </SearchBox>
        </AddressRow>

        <Body>
          <Sidebar>
            {sideGroups.map((group, g) => (
              <div key={g}>
                {group.map((item, i) => (
                  <SideItem key={i} href="#" $child={item.child} $active={item.active}>
                    <IconSlot $w={34}>{item.icon}</IconSlot>
                    <span>{item.label}</span>
                    {item.pinned && <PinIcon />}
                  </SideItem>
                ))}
              </div>
            ))}
          </Sidebar>

          <FileArea>
            <FileTable>
              <colgroup>
                <col width="515" />
                <col width="287" />
                <col width="241" />
                <col width="152" />
              </colgroup>
              <thead>
                <tr>
                  <HeadCell $first>
                    <button>名称</button>
                    <Chevron dir="up" color="#888" />
                  </HeadCell>
                  <HeadCell><button>修改日期</button></HeadCell>
                  <HeadCell><button>类型</button></HeadCell>
                  <HeadCell><button>大小</button></HeadCell>
                </tr>
              </thead>
              <tbody>
                {files.map(([name, time, type, size, icon]) => (
                  <FileRow key={name} $focused={name === 'ZZJianCe.exe'} $hover={name === 'ZZMD5.md5'}>
                    <NameCell>
                      <span>
                        <IconSlot $w={36}>{icon || <PageIcon />}</IconSlot>
                        {name}
                      </span>
                    </NameCell>
                    <Cell>2022/3/23 {time}</Cell>
                    <Cell>{type}</Cell>
                    <Cell $right>{size}</Cell>
                  </FileRow>
                ))}
              </tbody>
            </FileTable>
            <Tooltip role="tooltip">
              类型: MD5 文件<br />
              大小: 703 字节<br />
              修改日期: 2022/3/23 19:40
            </Tooltip>
          </FileArea>

          <DiskPane>
            <DiskHead>
              <UsbIcon />
              <DiskName>移动...(G:)</DiskName>
              <MutedText>可用</MutedText>
              <FreeSize>53.8G</FreeSize>
              <Divider />
              <GearIcon />
            </DiskHead>
            <ul>
              {diskFiles.map(([name, icon]) => (
                <DiskRow key={name}>
                  <IconSlot $w={28}>{icon}</IconSlot>
                  {name}
                </DiskRow>
              ))}
            </ul>
            <PaneHandle aria-label="收起">
              <Chevron size={26} color="#444" />
            </PaneHandle>
          </DiskPane>
        </Body>

        <StatusBar>
          15 个项目
          <ViewButton $active aria-label="详细信息"><DetailsViewIcon /></ViewButton>
          <ViewButton aria-label="大图标"><PictureIcon /></ViewButton>
        </StatusBar>
      </Explorer>

      <Mascot>
        <svg width="100" height="98" viewBox="0 0 100 98">
          <circle cx="50" cy="49" r="47" fill="#eef1f6" stroke="#4a94ec" strokeWidth="4" />
          <path d="M14 66q0-48 36-48t36 48l-2 16q-14 12-34 12T16 82z" fill="#c3c8d0" />
          <path d="M12 64q38 12 76 0v10q-38 14-76 0z" fill="#a3aab5" />
          <ellipse cx="50" cy="60" rx="22" ry="6" fill="#fafafa" />
          <circle cx="43" cy="42" r="8" fill="#fff" />
          <circle cx="60" cy="42" r="8" fill="#fff" />
          <circle cx="44" cy="42" r="2.6" fill="#777" />
          <path d="M56 43q4-4 8 0" stroke="#777" strokeWidth="2.4" fill="none" />
          <path d="M42 80h34v8q-16 8-34 6z" fill="#fff" />
        </svg>
      </Mascot>

      <MeterBack />
      <DarkMeter>
        <MeterText $top={24}>20<small>%</small></MeterText>
        <MeterArc width="116" height="116" viewBox="0 0 116 116">
          <path d="M60 7a51 51 0 0 1 46 33" fill="none" stroke="#35c3c0" strokeWidth="4" />
        </MeterArc>
      </DarkMeter>

      <NetSpeed><span>↑</span><span>0</span></NetSpeed>
      <GreenMeter>
        <GreenMeterFace>
          <MeterText $top={17}>20<small>%</small></MeterText>
        </GreenMeterFace>
      </GreenMeter>

      <Watermark>
        <p>Windows</p>
        <p>Build 19041.vb_release</p>
      </Watermark>
    </Desktop>

    <Taskbar>
      <Grip $w={45} $pad={12} />
      <TaskButton aria-label="浏览器">
        <svg width="48" height="48" viewBox="0 0 96 96"><BrowserE /></svg>
      </TaskButton>
      <TaskButton aria-label="网盘"><BaiduTile><BaiduIcon size={38} /></BaiduTile></TaskButton>
      <TaskButton $active aria-label="文件资源管理器">
        <svg width="46" height="38" viewBox="0 0 46 38">
          <path d="M1 1h17l3 4h24v31H1z" fill="#ffd46b" />
          <path d="M1 1h17l3 4H1z" fill="#e9a325" />
          <path d="M8 37V20h30v17h-8v-8H16v8z" fill="#3794dc" />
        </svg>
      </TaskButton>
      <TaskButton aria-label="录制">
        <svg width="48" height="48" viewBox="0 0 48 48">
          <rect width="48" height="48" rx="4" fill="#2b2a2a" />
          <circle cx="24" cy="24" r="14" fill="none" stroke="#fcd62e" strokeWidth="4" />
          <circle cx="40" cy="8" r="2.6" fill="#fcd62e" />
        </svg>
      </TaskButton>
      <TaskButton aria-label="ZZJianCe"><SphereIcon /></TaskButton>

      <Tray>
        <Grip $w={28} $pad={0} />
        <TrayIcon $w={42} $gap={40} aria-label="QQ">
          <svg width="32" height="32" viewBox="0 0 32 32">
            <rect width="32" height="32" rx="5" fill="#1f7ee6" />
            <circle cx="15" cy="15" r="9" fill="none" stroke="#fff" strokeWidth="4" />
            <path d="M17 18l7 7" stroke="#fff" strokeWidth="4" />
          </svg>
        </TrayIcon>
        <TrayIcon $w={82} aria-label="U盘"><UsbIcon w={20} h={30} body="#2fa32c" cap="#fff" mark="#d8f5d4" /></TrayIcon>
        <TrayIcon $w={32} aria-label="更多"><Chevron dir="up" size={26} color="#e8e8e8" stroke={1.6} /></TrayIcon>
        <TrayIcon $w={64} aria-label="安全卫士">
          <svg width="34" height="34" viewBox="0 0 34 34">
            <circle cx="17" cy="17" r="15" fill="#fbd412" stroke="#3f9a2a" strokeWidth="2" />
            <path d="M17 9v16M9 17h16" stroke="#2d8a22" strokeWidth="4" />
          </svg>
        </TrayIcon>
        <TrayIcon $w={30} aria-label="U盘助手"><UsbIcon w={24} h={32} body="#66b9f2" cap="#9fb8d8" mark="#2a74bb" /></TrayIcon>
        <TrayIcon $w={66} aria-label="麦克风">
          <svg width="24" height="34" viewBox="0 0 24 34">
            <rect x="5" y="1" width="14" height="23" rx="2" fill="#fff" />
            <path d="M2 19q0 9 10 9t10-9M12 28v4M5 32h14" fill="none" stroke="#fff" strokeWidth="2" />
          </svg>
        </TrayIcon>
        <TrayIcon $w={32} aria-label="电脑管家">
          <svg width="28" height="30" viewBox="0 0 28 30">
            <path d="M1 5q13-8 26 0 1 16-13 24Q0 21 1 5z" fill="#2450dc" />
            <path d="M5 8q9-5 18 0 0 11-9 17-9-6-9-17zM5 8l9 8 9-8" fill="none" stroke="#fff" strokeWidth="2.4" />
          </svg>
        </TrayIcon>
        <TrayIcon $w={62} aria-label="音量">
          <svg width="34" height="30" viewBox="0 0 34 30">
            <path d="M1 10h6l8-8v26l-8-8H1z" fill="none" stroke="#e8e8e8" strokeWidth="2" />
            <path d="M19 11q3 4 0 8M23 7q6 8 0 16" fill="none" stroke="#e8e8e8" strokeWidth="2" />
            <path d="M27 3q10 12 0 24" fill="none" stroke="#708090" strokeWidth="2" />
          </svg>
        </TrayIcon>
        <TrayIcon $w={48} aria-label="输入法">
          <svg width="48" height="28" viewBox="0 0 48 28">
            <rect x="1" y="1" width="46" height="26" fill="none" stroke="#eee" strokeWidth="2" />
            <path d="M6 8h36M6 14h36" stroke="#eee" strokeWidth="2" strokeDasharray="3 2" />
            <path d="M6 20h5M14 20h20M37 20h5" stroke="#eee" strokeWidth="2" />
          </svg>
        </TrayIcon>
        <Clock>
          <span>13:29</span>
          <span>2022/3/23</span>
        </Clock>
      </Tray>
    </Taskbar>
  </Screen>
);

export default App;
